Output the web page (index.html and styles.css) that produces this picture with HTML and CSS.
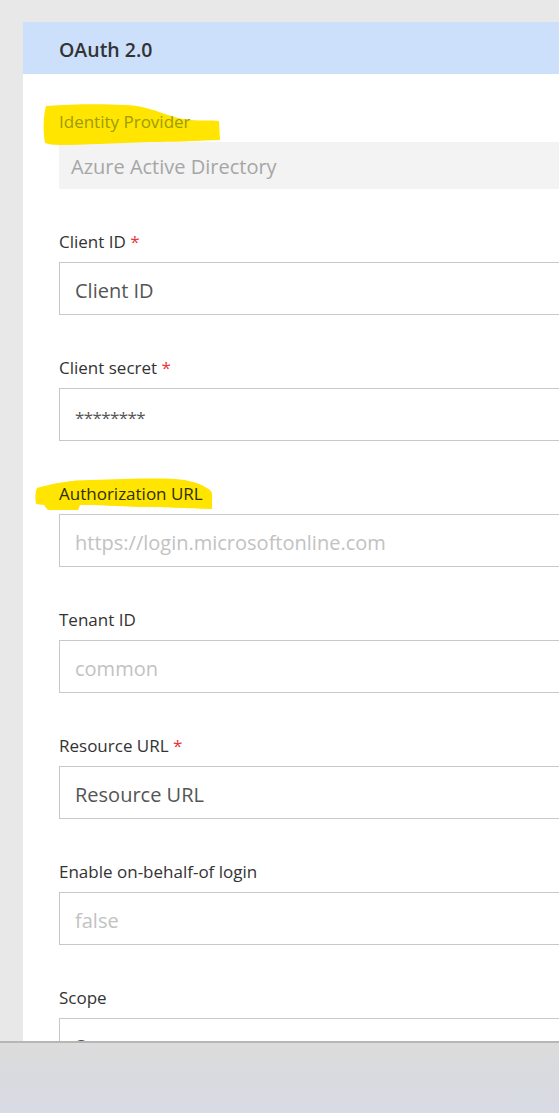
FILE: index.html
```html
<!DOCTYPE html>
<html lang="en">
<head>
<meta charset="utf-8">
<title>OAuth 2.0</title>
<link rel="stylesheet" href="styles.css">
</head>
<body>
<div class="page">
  <section class="panel">
    <header class="panel-head">OAuth 2.0</header>
    <div class="panel-body">
      <div class="field">
        <label class="label label-idp">
          <svg class="hl hl-idp" width="178" height="44" viewBox="0 0 178 44" aria-hidden="true"><path d="M3,3 C30,1 60,1 82,2 C110,3 125,15 147,17 C160,18 168,17 176,18 L177,37 C150,38 130,39 107,39 C70,40 40,42 17,42 C10,42 5,41 2,40 C0,28 0,14 3,3 Z"/></svg>
          <span class="label-text">Identity Provider</span>
        </label>
        <div class="input input-disabled">Azure Active Directory</div>
      </div>
      <div class="field">
        <label class="label"><span class="label-text">Client ID <span class="req">*</span></span></label>
        <div class="input value">Client ID</div>
      </div>
      <div class="field">
        <label class="label"><span class="label-text">Client secret <span class="req">*</span></span></label>
        <div class="input value secret">********</div>
      </div>
      <div class="field">
        <label class="label label-auth">
          <svg class="hl hl-auth" width="180" height="36" viewBox="0 0 180 36" aria-hidden="true"><path d="M3,11 C20,6 38,3 56,3 C90,2 120,1 141,2 C155,3 165,6 171,10 C175,12 178,14 178,17 L178,32 C150,31 128,30 106,30 C85,29 62,28 46,28 C45,30 45,32 44,33 L14,33 C12,31 11,29 10,28 C7,28 4,27 2,27 C1,21 1,15 3,11 Z"/></svg>
          <span class="label-text">Authorization URL</span>
        </label>
        <div class="input placeholder">https://login.microsoftonline.com</div>
      </div>
      <div class="field">
        <label class="label"><span class="label-text">Tenant ID</span></label>
        <div class="input placeholder">common</div>
      </div>
      <div class="field">
        <label class="label"><span class="label-text">Resource URL <span class="req">*</span></span></label>
        <div class="input value">Resource URL</div>
      </div>
      <div class="field">
        <label class="label"><span class="label-text">Enable on-behalf-of login</span></label>
        <div class="input placeholder">false</div>
      </div>
      <div class="field">
        <label class="label"><span class="label-text">Scope</span></label>
        <div class="input value">Scope</div>
      </div>
    </div>
  </section>
</div>
<div class="taskbar"></div>
</body>
</html>
```

FILE: styles.css
```css
html, body {
  margin: 0;
  padding: 0;
  overflow: hidden;
  height: 100%;
}

body {
  background: #e8e8e8;
  font-family: "Open Sans", "Noto Sans", "Liberation Sans", sans-serif;
  color: #333;
}

.page {
  padding: 22px 0 0 23px;
}

.panel {
  width: 640px;
  background: #ffffff;
  min-height: 1200px;
}

.panel-head {
  height: 52px;
  background: #cce0fc;
  display: flex;
  align-items: center;
  padding-left: 36px;
  font-size: 19.5px;
  font-weight: 600;
  color: #333;
  padding-top: 2px;
  box-sizing: border-box;
}

.panel-body {
  padding: 37px 0 0 36px;
}

.field {
  margin-bottom: 42px;
}

.label {
  display: block;
  position: relative;
  height: 22px;
  line-height: 22px;
  font-size: 17px;
  color: #333;
  margin-bottom: 9px;
}

.label-text {
  position: relative;
  z-index: 1;
}

.hl {
  position: absolute;
  z-index: 0;
  fill: #ffe500;
}

.hl-idp {
  left: -16px;
  top: -8px;
}

.hl-auth {
  left: -25px;
  top: -6px;
}

.label-idp {
  color: #9c9c06;
}

.label-auth {
  color: #30300a;
}

.req {
  color: #e8343a;
}

.input {
  box-sizing: border-box;
  height: 53px;
  border: 1px solid #c8c8c8;
  display: flex;
  align-items: center;
  padding-left: 15px;
  padding-top: 4px;
  font-size: 20px;
  width: 600px;
}

.input-disabled {
  height: 47px;
  margin-top: 1px;
  border: none;
  border-radius: 2px;
  background: #f3f3f3;
  color: #a6a6a6;
  padding-left: 12px;
  padding-top: 1px;
}

.value {
  color: #555;
}

.secret {
  font-size: 17px;
  letter-spacing: -0.6px;
  padding-top: 6px;
}

.placeholder {
  color: #c2c2c2;
}

.taskbar {
  position: fixed;
  left: 0;
  right: 0;
  bottom: 0;
  height: 70px;
  border-top: 2px solid #b6b6b6;
  background: linear-gradient(180deg, #dcdcdc 0%, #d9dadf 45%, #d8dbe4 100%);
}
```
